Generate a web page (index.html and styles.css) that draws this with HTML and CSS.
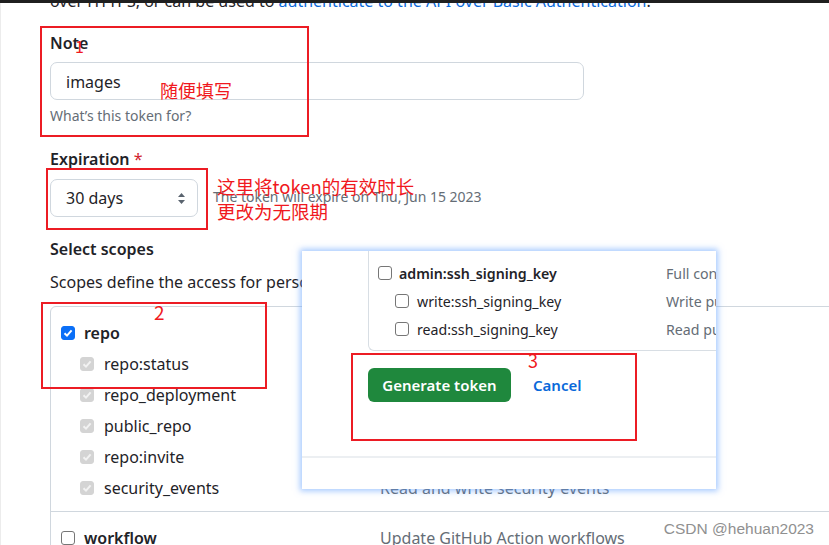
FILE: index.html
```html
<!DOCTYPE html>
<html lang="zh-CN">
<head>
<meta charset="utf-8">
<title>New personal access token</title>
<link rel="stylesheet" href="styles.css">
</head>
<body>
<div class="topbar"></div>
<main class="page">
  <div class="intro-clip">
    <p class="intro">over HTTPS, or can be used to <a class="link" href="#">authenticate to the API over Basic Authentication</a>.</p>
  </div>

  <section class="note-field">
    <label class="label">Note</label>
    <div class="input">images</div>
    <p class="hint">What’s this token for?</p>
  </section>

  <section class="exp-field">
    <label class="label">Expiration <span class="req">*</span></label>
    <div class="exp-row">
      <div class="select">
        <span>30 days</span>
        <svg class="updown" width="9" height="13" viewBox="0 0 9 13"><path d="M4.5 1 L8 5 L1 5 Z M4.5 12 L8 8 L1 8 Z" fill="#59636e"/></svg>
      </div>
      <span class="exp-note">The token will expire on Thu, Jun 15 2023</span>
    </div>
  </section>

  <h3 class="label scopes-title">Select scopes</h3>
  <p class="scopes-desc">Scopes define the access for personal tokens. Read more about OAuth scopes.</p>

  <div class="scopes">
    <div class="group">
      <div class="row">
        <span class="name"><span class="cb checked"><svg width="10" height="10" viewBox="0 0 10 10"><path d="M1.5 5.2 L4 7.6 L8.6 2.4" fill="none" stroke="#fff" stroke-width="2"/></svg></span><b>repo</b></span>
        <span class="desc">Full control of private repositories</span>
      </div>
      <div class="row sub">
        <span class="name"><span class="cb disabled"><svg width="10" height="10" viewBox="0 0 10 10"><path d="M1.5 5.2 L4 7.6 L8.6 2.4" fill="none" stroke="#f2f2f2" stroke-width="2"/></svg></span>repo:status</span>
        <span class="desc">Access commit status</span>
      </div>
      <div class="row sub">
        <span class="name"><span class="cb disabled"><svg width="10" height="10" viewBox="0 0 10 10"><path d="M1.5 5.2 L4 7.6 L8.6 2.4" fill="none" stroke="#f2f2f2" stroke-width="2"/></svg></span>repo_deployment</span>
        <span class="desc">Access deployment status</span>
      </div>
      <div class="row sub">
        <span class="name"><span class="cb disabled"><svg width="10" height="10" viewBox="0 0 10 10"><path d="M1.5 5.2 L4 7.6 L8.6 2.4" fill="none" stroke="#f2f2f2" stroke-width="2"/></svg></span>public_repo</span>
        <span class="desc">Access public repositories</span>
      </div>
      <div class="row sub">
        <span class="name"><span class="cb disabled"><svg width="10" height="10" viewBox="0 0 10 10"><path d="M1.5 5.2 L4 7.6 L8.6 2.4" fill="none" stroke="#f2f2f2" stroke-width="2"/></svg></span>repo:invite</span>
        <span class="desc">Access repository invitations</span>
      </div>
      <div class="row sub">
        <span class="name"><span class="cb disabled"><svg width="10" height="10" viewBox="0 0 10 10"><path d="M1.5 5.2 L4 7.6 L8.6 2.4" fill="none" stroke="#f2f2f2" stroke-width="2"/></svg></span>security_events</span>
        <span class="desc">Read and write security events</span>
      </div>
    </div>
    <div class="group last">
      <div class="row">
        <span class="name"><span class="cb"></span><b>workflow</b></span>
        <span class="desc">Update GitHub Action workflows</span>
      </div>
    </div>
  </div>
</main>

<div class="popup">
  <div class="panel">
    <div class="prow">
      <span class="name"><span class="cb small"></span><b>admin:ssh_signing_key</b></span>
      <span class="desc">Full control of public user SSH signing keys</span>
    </div>
    <div class="prow sub">
      <span class="name"><span class="cb small"></span>write:ssh_signing_key</span>
      <span class="desc">Write public user SSH signing keys</span>
    </div>
    <div class="prow sub">
      <span class="name"><span class="cb small"></span>read:ssh_signing_key</span>
      <span class="desc">Read public user SSH signing keys</span>
    </div>
  </div>
  <div class="actions">
    <span class="btn">Generate token</span>
    <a class="cancel" href="#">Cancel</a>
  </div>
  <div class="pop-sep"></div>
</div>

<div class="ann-box box-note"></div>
<div class="ann-box box-exp"></div>
<div class="ann-box box-repo"></div>
<div class="ann-box box-gen"></div>
<span class="ann-num num1">1</span>
<span class="ann-num num2">2</span>
<span class="ann-num num3">3</span>
<span class="ann-text ann-note">随便填写</span>
<span class="ann-text ann-exp">这里将token的有效时长<br>更改为无限期</span>

<span class="watermark">CSDN @hehuan2023</span>
</body>
</html>
```

FILE: styles.css
```css
* { box-sizing: border-box; }
html, body { margin: 0; padding: 0; }
body {
  width: 829px;
  height: 545px;
  overflow: hidden;
  position: relative;
  background: #fff;
  color: #1f2328;
  font-family: "Noto Sans", "Noto Sans CJK SC", sans-serif;
  font-size: 16px;
}
p, h3 { margin: 0; }
.topbar { height: 3px; background: #1f1f1f; }
.page {
  height: 542px;
  padding-left: 49px;
  border-left: 1px solid #ececec;
  overflow: hidden;
}
.intro-clip { height: 10px; overflow: hidden; }
.intro {
  margin-top: -14px;
  line-height: 24px;
  white-space: nowrap;
}
.link { color: #0969da; text-decoration: none; }

.label {
  display: block;
  font-size: 16px;
  font-weight: 600;
  line-height: 24px;
}
.note-field { margin-top: 18px; }
.input {
  margin-top: 7px;
  width: 534px;
  height: 38px;
  border: 1px solid #d0d7de;
  border-radius: 7px;
  padding: 2px 0 0 15px;
  line-height: 34px;
}
.hint {
  margin-top: 6px;
  font-size: 14px;
  line-height: 20px;
  color: #656d76;
}
.exp-field { margin-top: 21px; }
.req { color: #d1242f; font-weight: 400; }
.exp-row {
  margin-top: 8px;
  display: flex;
  align-items: center;
  gap: 15px;
}
.select {
  width: 148px;
  height: 38px;
  border: 1px solid #d0d7de;
  border-radius: 7px;
  padding: 0 11px 0 15px;
  display: flex;
  align-items: center;
  justify-content: space-between;
}
.exp-note {
  font-size: 14px;
  color: #656d76;
  margin-top: -4px;
}
.scopes-title { margin-top: 20px; }
.scopes-desc { margin-top: 9px; line-height: 24px; white-space: nowrap; }

.scopes {
  margin-top: 12px;
  margin-right: -40px;
  border: 1px solid #d0d7de;
  border-radius: 6px;
}
.group {
  padding: 10px 0 8px 10px;
  border-bottom: 1px solid #d0d7de;
}
.group.last { border-bottom: 0; }
.row {
  display: grid;
  grid-template-columns: 319px 1fr;
  height: 31px;
  align-items: center;
}
.name {
  display: flex;
  align-items: center;
  gap: 9px;
  white-space: nowrap;
}
.name b { font-weight: 600; }
.row.sub .name { padding-left: 19px; gap: 10px; }
.desc { color: #656d76; white-space: nowrap; }

.cb {
  flex: none;
  width: 14px;
  height: 14px;
  border: 1px solid #767676;
  border-radius: 3px;
  background: #fff;
  display: inline-flex;
  align-items: center;
  justify-content: center;
}
.cb.checked { background: #0b6ff7; border-color: #0b6ff7; }
.cb.disabled { background: #d4d4d4; border-color: #d4d4d4; }

.popup {
  position: absolute;
  left: 302px;
  top: 251px;
  width: 414px;
  height: 238px;
  background: #fff;
  overflow: hidden;
  box-shadow: 0 0 6px 2px rgba(90, 155, 255, 0.55);
}
.panel {
  margin-left: 66px;
  margin-right: -60px;
  padding: 8px 0 7px 9px;
  border-left: 1px solid #d8dee4;
  border-bottom: 1px solid #d8dee4;
  border-bottom-left-radius: 6px;
  font-size: 14.2px;
  overflow: hidden;
}
.prow {
  display: grid;
  grid-template-columns: 288px 1fr;
  height: 28px;
  align-items: center;
}
.prow .name { gap: 7px; }
.prow.sub .name { padding-left: 17px; gap: 8px; }
.cb.small { width: 14px; height: 14px; }
.actions {
  margin: 17px 0 0 66px;
  display: flex;
  align-items: center;
  gap: 22px;
}
.btn {
  width: 143px;
  height: 34px;
  border-radius: 6px;
  background: #1f883d;
  color: #fff;
  font-size: 15px;
  font-weight: 600;
  display: flex;
  align-items: center;
  justify-content: center;
}
.cancel {
  color: #0969da;
  font-size: 15px;
  font-weight: 600;
  text-decoration: none;
}
.pop-sep {
  margin-top: 54px;
  border-top: 2px solid #eceff2;
}

.ann-box { position: absolute; border: 2px solid #ec1c24; }
.box-note { left: 40px; top: 26px; width: 269px; height: 111px; }
.box-exp { left: 46px; top: 168px; width: 162px; height: 62px; }
.box-repo { left: 41px; top: 302px; width: 226px; height: 87px; }
.box-gen { left: 351px; top: 353px; width: 286px; height: 88px; }

.ann-num, .ann-text {
  position: absolute;
  color: #f01820;
  font-family: "Noto Sans CJK SC", sans-serif;
  white-space: nowrap;
}
.num1 { left: 75px; top: 37px; font-size: 16px; line-height: 18px; }
.num2 { left: 154px; top: 302px; font-size: 19px; line-height: 20px; }
.num3 { left: 528px; top: 351px; font-size: 18px; line-height: 19px; }
.ann-text { font-size: 18.5px; }
.ann-note { left: 160px; top: 80px; line-height: 20px; font-size: 18px; }
.ann-exp { left: 217px; top: 174px; line-height: 25px; }

.watermark {
  position: absolute;
  right: 15px;
  top: 520px;
  font-family: "Liberation Sans", Arial, sans-serif;
  font-size: 15.5px;
  color: #909090;
  white-space: nowrap;
}
```
